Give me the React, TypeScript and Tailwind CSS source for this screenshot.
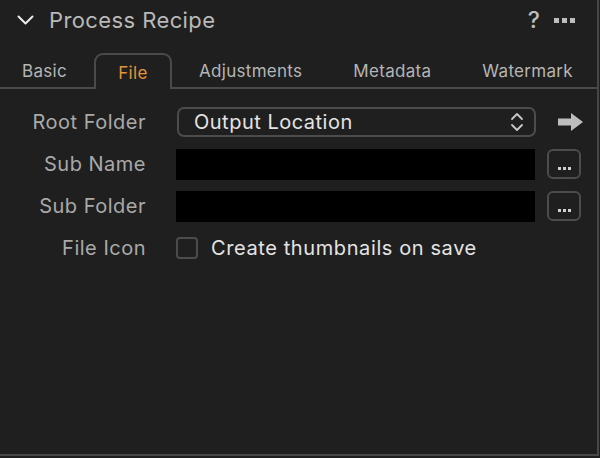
const labelCls = "w-[146px] text-right text-[20px] text-[#a9a9a9] tracking-[0.5px]";

function DotsButton() {
  return (
    <div className="w-[34px] h-[30px] rounded-[6px] border-2 border-[#4c4c4c] flex items-end justify-center pb-[7px] gap-[2px]">
      <span className="w-[3px] h-[3px] bg-[#d0d0d0]" />
      <span className="w-[3px] h-[3px] bg-[#d0d0d0]" />
      <span className="w-[3px] h-[3px] bg-[#d0d0d0]" />
    </div>
  );
}

export default function App() {
  const tabs = ["Basic", "File", "Adjustments", "Metadata", "Watermark"];
  return (
    <div className="w-[600px] h-[458px] bg-[#1f1f1f]" style={{ fontFamily: "Inter, 'Noto Sans', sans-serif" }}>
      <div className="w-[599px] h-[456px] border-r-2 border-b-2 border-[#474747] flex flex-col">
        {/* header */}
        <div className="h-[40px] flex items-center pl-[17px] pr-[22px]">
          <svg width="17" height="10" viewBox="0 0 17 10" fill="none" stroke="#ececec" strokeWidth="2" strokeLinecap="round" strokeLinejoin="round">
            <path d="M1.5 1.5 L8.5 8.5 L15.5 1.5" />
          </svg>
          <span className="ml-[15px] text-[22px] text-[#b9b9b9] tracking-[0.4px]">Process Recipe</span>
          <span className="ml-auto text-[23px] font-medium text-[#bdbdbd] leading-none">?</span>
          <div className="ml-[14px] flex gap-[3px]">
            <span className="w-[5px] h-[5px] bg-[#bdbdbd]" />
            <span className="w-[5px] h-[5px] bg-[#bdbdbd]" />
            <span className="w-[5px] h-[5px] bg-[#bdbdbd]" />
          </div>
        </div>
        {/* tabs */}
        <div className="mt-[13px] h-[36px] flex items-end border-b-2 border-[#4a4a4a] pl-[22px]">
          {tabs.map((t) => {
            const active = t === "File";
            if (active) {
              return (
                <div
                  key={t}
                  className="-mb-[2px] ml-[27px] mr-[27px] w-[78px] h-[36px] pt-[3px] rounded-t-[9px] border-2 border-b-0 border-[#4a4a4a] bg-[#1f1f1f] flex items-center justify-center text-[17px] text-[#e3943c] tracking-[0.3px]"
                >
                  {t}
                </div>
              );
            }
            return (
              <div
                key={t}
                className={`h-[34px] pt-[3px] flex items-center text-[17px] text-[#b5b5b5] tracking-[0.3px] ${
                  t === "Adjustments" || t === "Metadata" ? "mr-[51px]" : ""
                }`}
              >
                {t}
              </div>
            );
          })}
        </div>
        {/* rows */}
        <div className="flex flex-col mt-[18px] gap-[12px]">
          <div className="flex items-center h-[30px]">
            <div className={labelCls}>Root Folder</div>
            <div className="ml-[31px] w-[359px] h-[30px] rounded-[7px] border-2 border-[#4c4c4c] flex items-center pl-[15px] pr-[10px]">
              <span className="text-[20px] text-[#e4e4e4] tracking-[0.5px]">Output Location</span>
              <svg className="ml-auto" width="14" height="22" viewBox="0 0 14 22" fill="none" stroke="#c8c8c8" strokeWidth="1.8" strokeLinecap="round" strokeLinejoin="round">
                <path d="M2 8 L7 3 L12 8" />
                <path d="M2 14 L7 19 L12 14" />
              </svg>
            </div>
            <svg className="ml-[22px]" width="25" height="18" viewBox="0 0 25 18">
              <path d="M0 5.5 H13 V0 L25 9 L13 18 V12.5 H0 Z" fill="#bdbdbd" />
            </svg>
          </div>
          <div className="flex items-center h-[30px]">
            <div className={labelCls}>Sub Name</div>
            <div className="ml-[30px] w-[359px] h-[31px] bg-black" />
            <div className="ml-[12px]"><DotsButton /></div>
          </div>
          <div className="flex items-center h-[30px]">
            <div className={labelCls}>Sub Folder</div>
            <div className="ml-[30px] w-[359px] h-[31px] bg-black" />
            <div className="ml-[12px]"><DotsButton /></div>
          </div>
          <div className="flex items-center h-[30px]">
            <div className={labelCls}>File Icon</div>
            <div className="ml-[30px] w-[22px] h-[22px] rounded-[4px] border-2 border-[#4c4c4c]" />
            <span className="ml-[13px] text-[20px] text-[#e4e4e4] tracking-[0.6px]">Create thumbnails on save</span>
          </div>
        </div>
      </div>
    </div>
  );
}
